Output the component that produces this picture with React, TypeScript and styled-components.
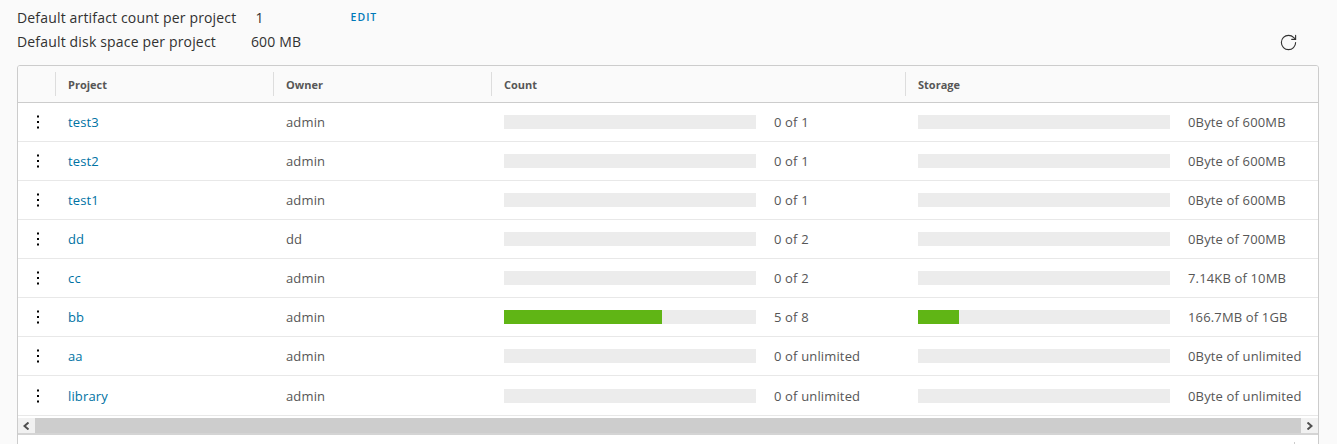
import React from "react";
import styled, { createGlobalStyle } from "styled-components";
import { RotateCw } from "lucide-react";

const GlobalStyle = createGlobalStyle`
  html, body { margin: 0; padding: 0; }
  body {
    background: #fafafa;
    font-family: "Open Sans", Lato, "Liberation Sans", sans-serif;
    color: #313131;
    overflow: hidden;
  }
`;

const Page = styled.div`
  padding: 5px 18px 0 17px;
`;

const Top = styled.div`
  display: flex;
  justify-content: space-between;
  align-items: flex-end;
  margin-bottom: 12px;
`;

const Settings = styled.div`
  display: flex;
  flex-direction: column;
`;

const SettingRow = styled.div`
  display: flex;
  align-items: center;
  height: 24px;
  font-size: 14px;
  letter-spacing: 0.17px;
`;

const Value = styled.span<{ $gap: number }>`
  margin-left: ${(p) => p.$gap}px;
`;

const EditButton = styled.button`
  margin-left: 87px;
  background: none;
  border: none;
  padding: 0;
  font-family: inherit;
  font-size: 10.5px;
  font-weight: 600;
  letter-spacing: 1px;
  color: #0079b8;
  cursor: pointer;
`;

const RefreshButton = styled.button`
  display: flex;
  align-items: center;
  justify-content: center;
  width: 22px;
  height: 22px;
  margin: 0 20px 0 0;
  padding: 0;
  background: none;
  border: none;
  color: #313131;
`;

const Table = styled.div`
  background: #fff;
  border: 1px solid #ccc;
  border-radius: 3px;
  overflow: hidden;
`;

const COLS = "37px 218px 218px 414px 1fr";

const HeaderRow = styled.div`
  display: grid;
  grid-template-columns: ${COLS};
  height: 36px;
  background: #fafafa;
  border-bottom: 1px solid #ccc;
`;

const HeaderCell = styled.div<{ $sep?: boolean }>`
  position: relative;
  display: flex;
  align-items: center;
  padding-left: 13px;
  font-size: 11px;
  font-weight: 700;
  color: #565656;
  &::before {
    content: "";
    display: ${(p) => (p.$sep ? "block" : "none")};
    position: absolute;
    left: 0;
    top: 6px;
    bottom: 6px;
    width: 1px;
    background: #ddd;
  }
`;

const Row = styled.div<{ $tall?: boolean }>`
  display: grid;
  grid-template-columns: ${COLS};
  height: ${(p) => (p.$tall ? 39 : 38)}px;
  border-bottom: 1px solid #e8e8e8;
`;

const Cell = styled.div`
  display: flex;
  align-items: center;
  padding-left: 13px;
  font-size: 13px;
  letter-spacing: 0.15px;
  color: #565656;
  white-space: nowrap;
`;

const ActionCell = styled.div`
  display: flex;
  align-items: center;
  justify-content: center;
  padding-left: 2px;
`;

const Link = styled.a`
  color: #0072a3;
  text-decoration: none;
  cursor: pointer;
`;

const Bar = styled.div`
  width: 252px;
  height: 14px;
  background: #ececec;
  flex: none;
`;

const Fill = styled.div`
  height: 100%;
  background: #60b515;
`;

const BarLabel = styled.span`
  margin-left: 18px;
`;

const ScrollBar = styled.div`
  display: flex;
  height: 15px;
  margin-top: 2px;
  background: #f1f1f1;
  border-bottom: 2px solid #d4d4d4;
`;

const ScrollArrow = styled.div`
  width: 17px;
  display: flex;
  align-items: center;
  justify-content: center;
  color: #505050;
`;

const Thumb = styled.div`
  flex: 1;
  background: #cdcdcd;
`;

const Footer = styled.div`
  height: 40px;
  display: flex;
  justify-content: flex-end;
  padding: 7px 23px 0 0;
`;

const FooterTick = styled.div`
  width: 1px;
  height: 20px;
  background: #ccc;
`;

const Kebab = () => (
  <svg width="4" height="14" viewBox="0 0 4 14">
    <rect x="1" y="0.5" width="2" height="2" fill="#000" />
    <rect x="1" y="6" width="2" height="2" fill="#000" />
    <rect x="1" y="11.5" width="2" height="2" fill="#000" />
  </svg>
);

const Chevron = ({ dir }: { dir: "left" | "right" }) => (
  <svg width="7" height="8" viewBox="0 0 7 8">
    <path
      d={dir === "left" ? "M5.5 0.5 L1.5 4 L5.5 7.5" : "M1.5 0.5 L5.5 4 L1.5 7.5"}
      fill="none"
      stroke="#505050"
      strokeWidth="2"
    />
  </svg>
);

type Item = {
  name: string;
  owner: string;
  count: number;
  countText: string;
  storage: number;
  storageText: string;
};

const data: Item[] = [
  { name: "test3", owner: "admin", count: 0, countText: "0 of 1", storage: 0, storageText: "0Byte of 600MB" },
  { name: "test2", owner: "admin", count: 0, countText: "0 of 1", storage: 0, storageText: "0Byte of 600MB" },
  { name: "test1", owner: "admin", count: 0, countText: "0 of 1", storage: 0, storageText: "0Byte of 600MB" },
  { name: "dd", owner: "dd", count: 0, countText: "0 of 2", storage: 0, storageText: "0Byte of 700MB" },
  { name: "cc", owner: "admin", count: 0, countText: "0 of 2", storage: 0, storageText: "7.14KB of 10MB" },
  { name: "bb", owner: "admin", count: 5 / 8, countText: "5 of 8", storage: 0.1628, storageText: "166.7MB of 1GB" },
  { name: "aa", owner: "admin", count: 0, countText: "0 of unlimited", storage: 0, storageText: "0Byte of unlimited" },
  { name: "library", owner: "admin", count: 0, countText: "0 of unlimited", storage: 0, storageText: "0Byte of unlimited" },
];

export default function App() {
  return (
    <>
      <GlobalStyle />
      <Page>
        <Top>
          <Settings>
            <SettingRow>
              <span>Default artifact count per project</span>
              <Value $gap={19}>1</Value>
              <EditButton>EDIT</EditButton>
            </SettingRow>
            <SettingRow>
              <span>Default disk space per project</span>
              <Value $gap={35}>600 MB</Value>
            </SettingRow>
          </Settings>
          <RefreshButton aria-label="refresh">
            <RotateCw size={19} strokeWidth={1.4} />
          </RefreshButton>
        </Top>
        <Table>
          <HeaderRow>
            <HeaderCell />
            <HeaderCell $sep>Project</HeaderCell>
            <HeaderCell $sep>Owner</HeaderCell>
            <HeaderCell $sep>Count</HeaderCell>
            <HeaderCell $sep>Storage</HeaderCell>
          </HeaderRow>
          {data.map((d, i) => (
            <Row key={d.name} $tall={i === data.length - 1}>
              <ActionCell>
                <Kebab />
              </ActionCell>
              <Cell>
                <Link>{d.name}</Link>
              </Cell>
              <Cell>{d.owner}</Cell>
              <Cell>
                <Bar>
                  <Fill style={{ width: `${d.count * 100}%` }} />
                </Bar>
                <BarLabel>{d.countText}</BarLabel>
              </Cell>
              <Cell>
                <Bar>
                  <Fill style={{ width: `${d.storage * 100}%` }} />
                </Bar>
                <BarLabel>{d.storageText}</BarLabel>
              </Cell>
            </Row>
          ))}
          <ScrollBar>
            <ScrollArrow>
              <Chevron dir="left" />
            </ScrollArrow>
            <Thumb />
            <ScrollArrow>
              <Chevron dir="right" />
            </ScrollArrow>
          </ScrollBar>
          <Footer>
            <FooterTick />
          </Footer>
        </Table>
      </Page>
    </>
  );
}
